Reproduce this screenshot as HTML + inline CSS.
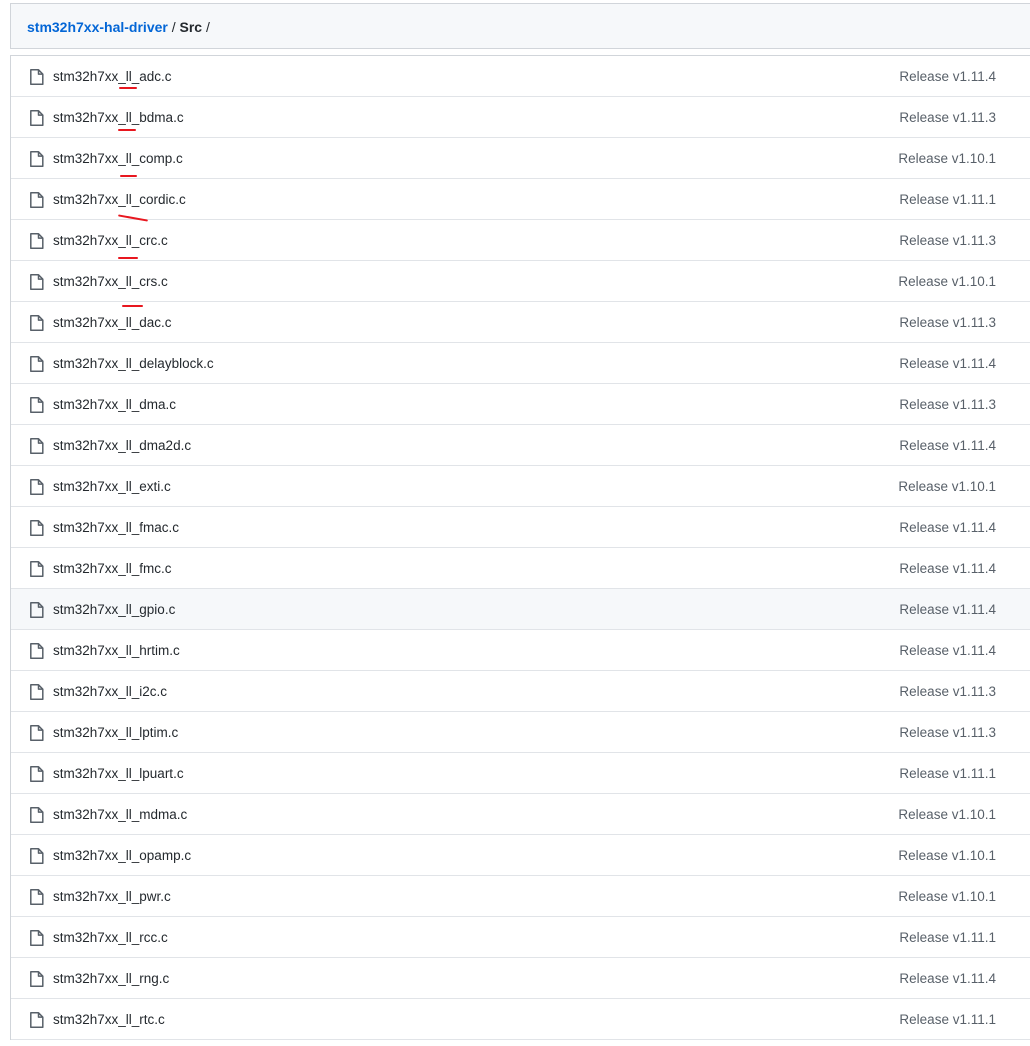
<!DOCTYPE html>
<html><head><meta charset="utf-8"><style>
html,body{margin:0;width:1030px;height:1046px;overflow:hidden;background:#fff}
body{font-family:"Segoe UI","Liberation Sans",sans-serif;font-size:13.5px;position:relative}
.hdr{position:absolute;left:10px;top:3px;width:1030px;height:46px;background:#f6f8fa;border-top:1px solid #d1d5da;border-left:1px solid #d1d5da;border-bottom:1px solid #d1d5da;box-sizing:border-box}
.hdr span{position:absolute;left:16px;top:15px;font-size:14px;color:#24292e}
.hdr a{color:#0366d6;font-weight:600;text-decoration:none}
.hdr b{font-weight:600}
.tbl{position:absolute;left:10px;top:55px;width:1030px;border-top:1px solid #d1d5da;border-left:1px solid #d1d5da}
.row{height:40px;border-bottom:1px solid #e1e4e8;position:relative}
.row.h{background:#f6f8fa}
.row svg{position:absolute;left:18px;top:12px}
.nm{position:absolute;left:42px;top:13px;color:#24292e}
.rl{position:absolute;right:45px;top:13px;color:#586069}
.red{position:absolute;height:2px;background:#e8171f;border-radius:1px}
</style></head><body>
<div class="hdr"><span><a>stm32h7xx-hal-driver</a> / <b>Src</b> /</span></div>
<div class="tbl" id="t"></div>
<div class="red" style="left:119px;top:87px;width:18px"></div>
<div class="red" style="left:118px;top:129px;width:18px"></div>
<div class="red" style="left:120px;top:175px;width:17px"></div>
<div class="red" style="left:118px;top:217px;width:30px;transform:rotate(10deg)"></div>
<div class="red" style="left:118px;top:257px;width:20px"></div>
<div class="red" style="left:122px;top:305px;width:21px"></div>
<script>
var d=[["adc","1.11.4"],["bdma","1.11.3"],["comp","1.10.1"],["cordic","1.11.1"],["crc","1.11.3"],["crs","1.10.1"],["dac","1.11.3"],["delayblock","1.11.4"],["dma","1.11.3"],["dma2d","1.11.4"],["exti","1.10.1"],["fmac","1.11.4"],["fmc","1.11.4"],["gpio","1.11.4"],["hrtim","1.11.4"],["i2c","1.11.3"],["lptim","1.11.3"],["lpuart","1.11.1"],["mdma","1.10.1"],["opamp","1.10.1"],["pwr","1.10.1"],["rcc","1.11.1"],["rng","1.11.4"],["rtc","1.11.1"]];
var h="",ic='<svg width="16" height="18" viewBox="0 0 16 18"><path d="M1.8 1.8h7.7l4.3 4.3v10.1h-12z M9.5 1.8v4.3h4.3" fill="none" stroke="#586069" stroke-width="1.5" stroke-linejoin="round"/></svg>';
d.forEach(function(r,i){h+='<div class="row'+(i==13?' h':'')+'">'+ic+'<span class="nm">stm32h7xx_ll_'+r[0]+'.c</span><span class="rl">Release v'+r[1]+'</span></div>'});
document.getElementById("t").innerHTML=h;
</script>
</body></html>
